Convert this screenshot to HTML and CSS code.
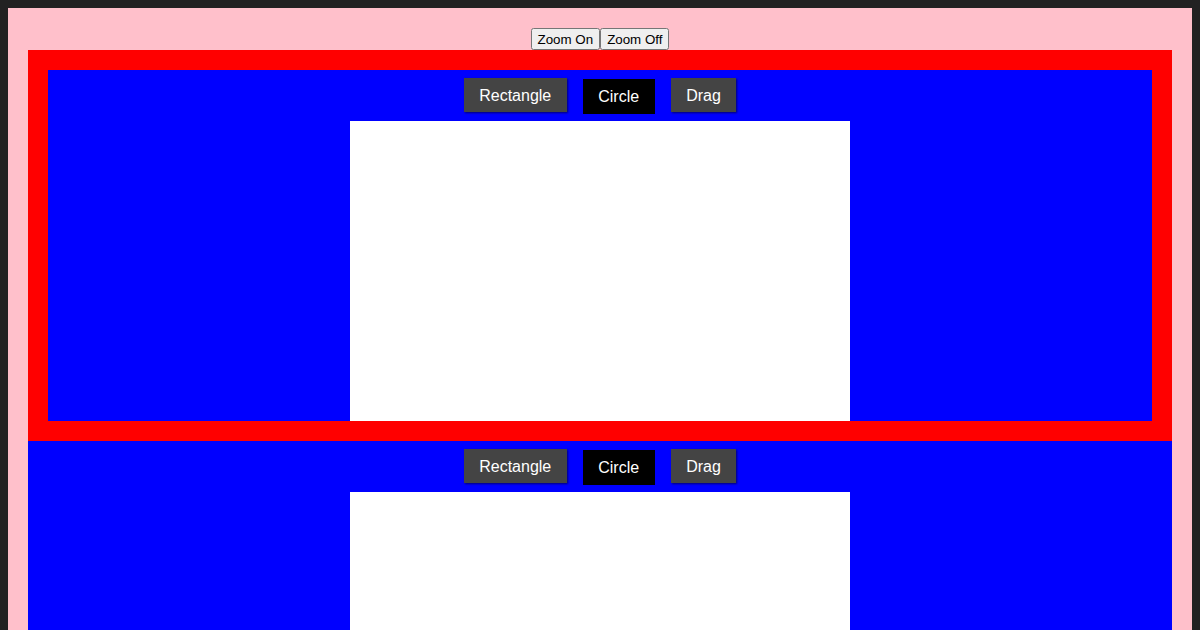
FILE: index.html
```html
<!DOCTYPE html>
<html>
<head>
<meta charset="utf-8">
<link rel="stylesheet" href="styles.css">
</head>
<body>
<div class="zoom-row"><button class="zoom-btn">Zoom On</button><button class="zoom-btn">Zoom Off</button></div>
<div class="frame">
  <div class="panel">
    <div class="tools">
      <button class="tool">Rectangle</button>
      <button class="tool active">Circle</button>
      <button class="tool">Drag</button>
    </div>
    <div class="canvas"></div>
  </div>
</div>
<div class="panel">
  <div class="tools">
    <button class="tool">Rectangle</button>
    <button class="tool active">Circle</button>
    <button class="tool">Drag</button>
  </div>
  <div class="canvas"></div>
</div>
</body>
</html>
```
FILE: styles.css
```css
html {
  background: #222222;
}
body {
  margin: 8px;
  padding: 20px 20px 0;
  background: #ffc0cb;
  font-family: "Liberation Sans", Arial, sans-serif;
  min-height: 700px;
}
.zoom-row {
  display: flex;
  justify-content: center;
  height: 22px;
}
.zoom-btn {
  font-family: "Liberation Sans", Arial, sans-serif;
  font-size: 13.333px;
  margin: 0;
  padding: 1px 5px;
}
.frame {
  background: #ff0000;
  padding: 20px;
}
.panel {
  background: #0000ff;
}
.tools {
  display: flex;
  justify-content: center;
  align-items: flex-start;
  gap: 16px;
  padding: 8px 0;
  height: 35px;
}
.tool {
  font-family: "Liberation Sans", Arial, sans-serif;
  font-size: 16px;
  line-height: 18px;
  color: #ffffff;
  background: #444444;
  border: none;
  padding: 9px 15.5px 7px;
  margin: 0;
  box-shadow: 1px 1px 2px rgba(0, 0, 0, 0.55);
}
.tool.active {
  background: #000000;
  box-shadow: none;
  height: 35px;
  padding: 8px 15.5px;
  transform: translateY(1px);
}
.canvas {
  width: 500px;
  height: 300px;
  margin: 0 auto;
  background: #ffffff;
}
```
